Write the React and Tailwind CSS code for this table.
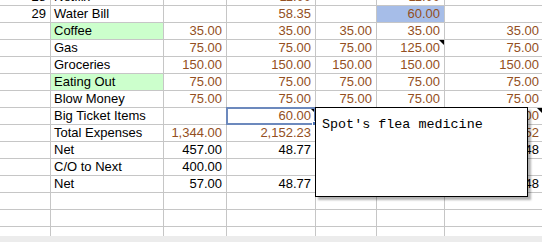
import React from "react";

const cols = [
  { key: "n", w: "w-[51px]", align: "text-right pr-[4px]" },
  { key: "label", w: "w-[113px]", align: "text-left pl-[3px]" },
  { key: "c", w: "w-[63px]", align: "text-right pr-[4px]" },
  { key: "d", w: "w-[89px]", align: "text-right pr-[4px]" },
  { key: "e", w: "w-[61px]", align: "text-right pr-[4px]" },
  { key: "f", w: "w-[68px]", align: "text-right pr-[4px]" },
  { key: "g", w: "w-[98px]", align: "text-right pr-[3px]" },
];

const rows = [
  { n: "28", label: "Netflix", d: "11.00", f: "11.00" },
  { n: "29", label: "Water Bill", d: "58.35", f: "60.00", hl: "f" },
  { label: "Coffee", green: true, c: "35.00", d: "35.00", e: "35.00", f: "35.00", g: "35.00" },
  { label: "Gas", c: "75.00", d: "75.00", e: "75.00", f: "125.00", g: "75.00", note: "f" },
  { label: "Groceries", c: "150.00", d: "150.00", e: "150.00", f: "150.00", g: "150.00" },
  { label: "Eating Out", green: true, c: "75.00", d: "75.00", e: "75.00", f: "75.00", g: "75.00" },
  { label: "Blow Money", c: "75.00", d: "75.00", e: "75.00", f: "75.00", g: "75.00" },
  { label: "Big Ticket Items", d: "60.00", g: "60.00", note: "d", noteG: true, selected: "d" },
  { label: "Total Expenses", c: "1,344.00", d: "2,152.23", g: "1,052.52" },
  { label: "Net", c: "457.00", d: "48.77", g: "12.48", black: true },
  { label: "C/O to Next", c: "400.00", black: true },
  { label: "Net", c: "57.00", d: "48.77", g: "12.48", black: true },
  {},
  {},
  {},
];

const Marker = () => (
  <div className="absolute top-0 right-0 w-0 h-0 border-t-[5px] border-t-black border-l-[5px] border-l-transparent" />
);

const Cell = ({ col, row }) => {
  const val = row[col.key];
  let bg = "";
  if (col.key === "label" && row.green) bg = "bg-[#ccffcc]";
  if (row.hl === col.key) bg = "bg-[#a6bde8]";
  const isNum = ["c", "d", "e", "f", "g"].includes(col.key);
  const color = isNum && !row.black ? "text-[#934f22]" : "text-black";
  return (
    <div
      className={`relative shrink-0 h-[17px] border-r border-b border-[#c6c6c6] ${col.w} ${col.align} ${bg} ${color} whitespace-nowrap overflow-visible`}
    >
      {val}
      {(row.note === col.key || (row.noteG && col.key === "g")) && <Marker />}
      {row.selected === col.key && (
        <div className="absolute -left-[1px] -top-[1px] w-[90px] h-[18px] border-2 border-[#6c89bd]">
          <div className="absolute -right-[3px] -bottom-[3px] w-[5px] h-[5px] bg-[#4b71b3] border border-white" />
        </div>
      )}
    </div>
  );
};

export default function App() {
  return (
    <div className="relative w-[542px] h-[242px] overflow-hidden bg-white flex flex-col font-['Liberation_Sans',Arial,sans-serif] text-[13px] leading-[16px]">
      <div className="flex-1 overflow-hidden">
        <div className="-mt-[11px]">
          {rows.map((row, i) => (
            <div key={i} className="flex">
              {cols.map((col) => (
                <Cell key={col.key} col={col} row={row} />
              ))}
            </div>
          ))}
        </div>
      </div>
      <div className="h-[6px] bg-[#ececec]" />

      {/* comment popup for the big ticket cell */}
      <div className="absolute left-[315px] top-[107px] w-[213px] h-[90px] bg-white border border-black shadow-[3px_3px_2px_rgba(0,0,0,0.3)] pl-[6px] pt-[9px] font-['Liberation_Mono','Courier_New',monospace] text-[13.4px] leading-[15px] text-black">
        Spot's flea medicine
      </div>
    </div>
  );
}
